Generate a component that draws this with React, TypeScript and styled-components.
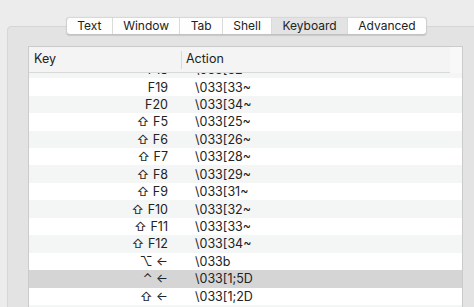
import React, {FC} from 'react';
import styled, {createGlobalStyle} from 'styled-components';

const GlobalStyle = createGlobalStyle`
  html, body {
    margin: 0;
    padding: 0;
    background: #ececec;
  }
  body {
    font-family: Inter, "Noto Sans", "Liberation Sans", sans-serif;
    color: #222;
    -webkit-font-smoothing: antialiased;
  }
`;

const ROW_HEIGHT = 17.44;

interface KeyRow {
  key: string;
  action: string;
}

const rows: KeyRow[] = [
  {key: 'F18', action: '\\033[32~'},
  {key: 'F19', action: '\\033[33~'},
  {key: 'F20', action: '\\033[34~'},
  {key: '\u21E7 F5', action: '\\033[25~'},
  {key: '\u21E7 F6', action: '\\033[26~'},
  {key: '\u21E7 F7', action: '\\033[28~'},
  {key: '\u21E7 F8', action: '\\033[29~'},
  {key: '\u21E7 F9', action: '\\033[31~'},
  {key: '\u21E7 F10', action: '\\033[32~'},
  {key: '\u21E7 F11', action: '\\033[33~'},
  {key: '\u21E7 F12', action: '\\033[34~'},
  {key: '\u2325 \u2190', action: '\\033b'},
  {key: '\u2303 \u2190', action: '\\033[1;5D'},
  {key: '\u21E7 \u2190', action: '\\033[1;2D'},
  {key: '\u2325 \u2192', action: '\\033f'},
];

const SELECTED = 12;

const tabs = ['Text', 'Window', 'Tab', 'Shell', 'Keyboard', 'Advanced'];

const App: FC = () => {
  return <Window>
    <GlobalStyle/>
    <TabBar>
      {tabs.map(t => <TabButton key={t} $active={t === 'Keyboard'}>{t}</TabButton>)}
    </TabBar>
    <GroupBox>
      <Table>
        <HeaderRow>
          <HeaderCell>Key</HeaderCell>
          <HeaderCell $divider>Action</HeaderCell>
          <HeaderCorner/>
        </HeaderRow>
        <Body>
          <RowList>
            {rows.map((r, i) => {
              const state = i === SELECTED ? 'selected' : i % 2 === 0 ? 'stripe' : 'plain';
              return <Row key={i} $state={state}>
                <KeyCell>{r.key}</KeyCell>
                <ActionCell>{r.action}</ActionCell>
              </Row>;
            })}
          </RowList>
        </Body>
      </Table>
    </GroupBox>
  </Window>;
};

export default App;

const Window = styled.div`
  width: 474px;
  height: 307px;
  overflow: hidden;
  background: #ececec;
  padding-top: 14px;
  box-sizing: border-box;
`;

const TabBar = styled.div`
  position: relative;
  z-index: 1;
  display: inline-flex;
  margin-left: 66px;
  height: 18px;
  box-sizing: border-box;
  background: #fefefe;
  border: 1px solid #cfcfcf;
  border-top-color: #d8d8d8;
  border-bottom-color: #c2c2c2;
  border-radius: 4px;
  box-shadow: 0 0.5px 1px rgba(0, 0, 0, 0.12);
  overflow: hidden;
`;

const TabButton = styled.div<{$active?: boolean}>`
  display: flex;
  align-items: center;
  padding: 0 10.3px;
  font-size: 12px;
  line-height: 16px;
  color: #222;
  background: ${p => p.$active ? '#e3e3e3' : 'transparent'};

  & + & {
    border-left: 1px solid #dadada;
  }
`;

const GroupBox = styled.div`
  margin-top: -9px;
  margin-left: 7px;
  margin-right: -30px;
  height: 320px;
  box-sizing: border-box;
  background: #e3e3e3;
  border: 1px solid #d6d6d6;
  border-radius: 4px;
  padding: 19px 0 0 20px;
`;

const Table = styled.div`
  width: 435px;
  height: 300px;
  box-sizing: border-box;
  background: #fff;
  border: 1px solid #cbcbcb;
  display: flex;
  flex-direction: column;
`;

const HeaderRow = styled.div`
  display: grid;
  grid-template-columns: 152px 1fr 12px;
  height: 26px;
  box-sizing: border-box;
  background: #f4f4f4;
  border-bottom: 1px solid #d9d9d9;
`;

const HeaderCell = styled.div<{$divider?: boolean}>`
  display: flex;
  align-items: center;
  padding-left: 5px;
  padding-bottom: 2px;
  font-size: 12.5px;
  color: #222;
  position: relative;
  ${p => p.$divider && `
    &::before {
      content: "";
      position: absolute;
      left: 0;
      top: 4px;
      bottom: 3px;
      width: 1px;
      background: #d9d9d9;
    }
  `}
`;

const HeaderCorner = styled.div`
  background: #f8f8f8;
  margin-bottom: -1px;
`;

const Body = styled.div`
  flex: 1;
  overflow: hidden;
`;

const RowList = styled.div`
  margin-top: -12.16px;
`;

const rowBg = {
  plain: '#ffffff',
  stripe: '#f4f5f5',
  selected: '#d5d5d5',
};

const Row = styled.div<{$state: 'plain' | 'stripe' | 'selected'}>`
  display: grid;
  grid-template-columns: 152px 1fr;
  height: ${ROW_HEIGHT}px;
  align-items: center;
  background: ${p => rowBg[p.$state]};
  font-size: 12.5px;
  line-height: 15px;
  color: #222;
`;

const KeyCell = styled.div`
  text-align: right;
  padding-right: 13px;
  white-space: nowrap;
`;

const ActionCell = styled.div`
  padding-left: 14px;
  white-space: nowrap;
`;
